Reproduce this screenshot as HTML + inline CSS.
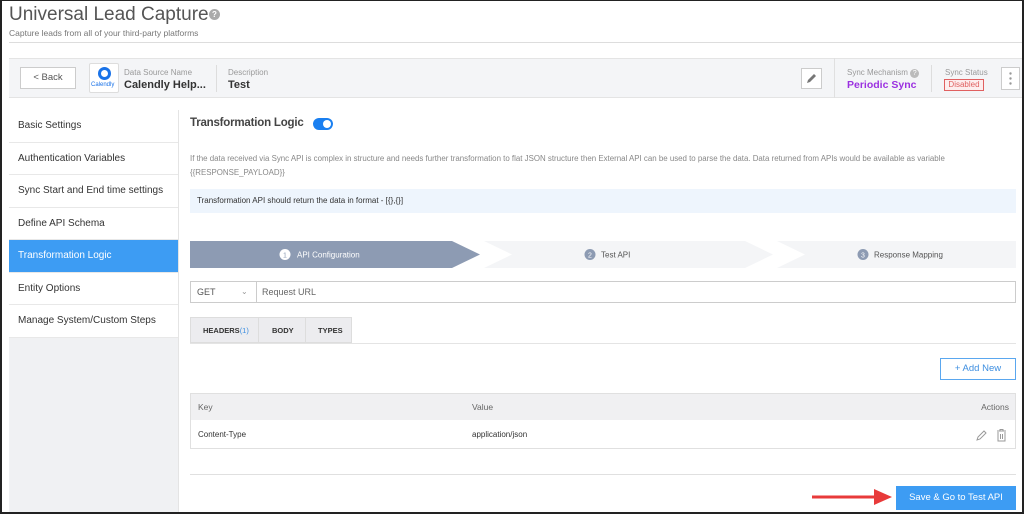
<!DOCTYPE html>
<html><head><style>
*{box-sizing:border-box;margin:0;padding:0}
body{width:1024px;height:514px;overflow:hidden;background:#fff;font-family:"Liberation Sans",sans-serif;color:#333;position:relative}
.a{position:absolute}
.frame{left:0;top:0;width:1024px;height:514px;border:2px solid #222;border-top:1px solid #222;z-index:50;pointer-events:none}
.side div{height:32.5px;border-bottom:1px solid #e8e8e8;font-size:10px;padding-left:9px;line-height:32px;color:#333;background:#fff}
.side .on{background:#3d9cf3;color:#fff}
.lbl{font-size:8px;color:#999}
</style></head><body>
<div class="a frame"></div>
<div class="a" style="left:9px;top:4px;font-size:19px;color:#555">Universal Lead Capture</div>
<div class="a" style="left:209px;top:9px;width:11px;height:11px;border-radius:50%;background:#aaa;color:#fff;font-size:8px;font-weight:bold;text-align:center;line-height:11px">?</div>
<div class="a" style="left:9px;top:28px;font-size:8.5px;color:#777">Capture leads from all of your third-party platforms</div>
<div class="a" style="left:9px;top:42px;width:1013px;height:1px;background:#ddd"></div>
<div class="a" style="left:9px;top:58px;width:1013px;height:40px;background:#f4f5f7;border-top:1px solid #e4e4e4;border-bottom:1px solid #e4e4e4"></div>
<div class="a" style="left:20px;top:67px;width:56px;height:22px;background:#fff;border:1px solid #ccc;font-size:9.5px;color:#555;text-align:center;line-height:20px">&lt; Back</div>
<div class="a" style="left:89px;top:63px;width:30px;height:30px;background:#fff;border:1px solid #ddd;border-radius:2px">
<div class="a" style="left:8px;top:3px;width:13px;height:13px;border-radius:50%;border:3px solid #1a73e8"></div>
<div class="a" style="left:1px;top:18px;font-size:6px;color:#1a73e8">Calendly</div></div>
<div class="a lbl" style="left:124px;top:68px">Data Source Name</div>
<div class="a" style="left:124px;top:79px;font-size:11px;font-weight:bold;color:#333">Calendly Help...</div>
<div class="a" style="left:216px;top:65px;width:1px;height:27px;background:#ddd"></div>
<div class="a lbl" style="left:228px;top:68px">Description</div>
<div class="a" style="left:228px;top:79px;font-size:11px;font-weight:bold">Test</div>
<div class="a" style="left:801px;top:68px;width:21px;height:21px;background:#fff;border:1px solid #ccc">
<svg width="19" height="19" viewBox="0 0 19 19"><path d="M5 14l1-3 6-6 2 2-6 6z" fill="#777"/></svg></div>
<div class="a" style="left:834px;top:58px;width:1px;height:40px;background:#e0e0e0"></div>
<div class="a lbl" style="left:847px;top:68px">Sync Mechanism <span style="display:inline-block;width:9px;height:9px;border-radius:50%;background:#bbb;color:#fff;font-size:7px;text-align:center;line-height:9px">?</span></div>
<div class="a" style="left:847px;top:79px;font-size:10.5px;font-weight:bold;color:#9b30e0">Periodic Sync</div>
<div class="a" style="left:931px;top:65px;width:1px;height:27px;background:#ddd"></div>
<div class="a lbl" style="left:945px;top:68px">Sync Status</div>
<div class="a" style="left:944px;top:79px;width:40px;height:12px;border:1px solid #e06060;background:#fdeeee;color:#e06060;font-size:8px;text-align:center;line-height:10px">Disabled</div>
<div class="a" style="left:1001px;top:67px;width:19px;height:23px;background:#fff;border:1px solid #ccc">
<svg width="17" height="21"><circle cx="8.5" cy="5.5" r="1.2" fill="#999"/><circle cx="8.5" cy="10.5" r="1.2" fill="#999"/><circle cx="8.5" cy="15.5" r="1.2" fill="#999"/></svg></div>

<div class="a" style="left:9px;top:110px;width:170px;height:404px;background:#f0f1f3;border-right:1px solid #e4e4e4"></div>
<div class="a side" style="left:9px;top:110px;width:169px">
<div>Basic Settings</div><div>Authentication Variables</div><div>Sync Start and End time settings</div><div>Define API Schema</div><div class="on">Transformation Logic</div><div>Entity Options</div><div>Manage System/Custom Steps</div></div>

<div class="a" style="left:190px;top:117px;font-size:11.5px;font-weight:bold;color:#444;letter-spacing:-0.2px">Transformation Logic</div>
<div class="a" style="left:313px;top:118px;width:20px;height:12px;border-radius:6px;background:#1a7ff0"><div class="a" style="left:10px;top:2px;width:8px;height:8px;border-radius:50%;background:#fff"></div></div>
<div class="a" style="left:190px;top:152px;font-size:7.9px;color:#888;line-height:14px;width:815px">If the data received via Sync API is complex in structure and needs further transformation to flat JSON structure then External API can be used to parse the data. Data returned from APIs would be available as variable {{RESPONSE_PAYLOAD}}</div>
<div class="a" style="left:190px;top:189px;width:826px;height:24px;background:#eef5fd;font-size:8px;color:#333;padding-left:7px;line-height:24px">Transformation API should return the data in format - [{},{}]</div>

<svg class="a" style="left:190px;top:241px" width="826" height="27">
<rect width="826" height="27" fill="#fff"/>
<polygon points="0,0 262,0 290,13.5 262,27 0,27" fill="#8d9bb3"/>
<polygon points="294,0 555,0 583,13.5 555,27 294,27 322,13.5" fill="#f4f5f7"/>
<polygon points="587,0 826,0 826,27 587,27 615,13.5" fill="#f4f5f7"/>
<circle cx="95" cy="13.5" r="5.5" fill="#fff"/><text x="95" y="16.5" font-size="7" text-anchor="middle" fill="#8d9bb3" font-family="Liberation Sans">1</text>
<text x="107" y="16.5" font-size="8" fill="#fff" font-family="Liberation Sans">API Configuration</text>
<circle cx="400" cy="13.5" r="5.5" fill="#8d9bb3"/><text x="400" y="16.5" font-size="7" text-anchor="middle" fill="#fff" font-family="Liberation Sans">2</text>
<text x="411" y="16.5" font-size="8" fill="#555" font-family="Liberation Sans">Test API</text>
<circle cx="673" cy="13.5" r="5.5" fill="#8d9bb3"/><text x="673" y="16.5" font-size="7" text-anchor="middle" fill="#fff" font-family="Liberation Sans">3</text>
<text x="684" y="16.5" font-size="8" fill="#555" font-family="Liberation Sans">Response Mapping</text>
</svg>

<div class="a" style="left:190px;top:281px;width:826px;height:22px;border:1px solid #ccc;font-size:9px;color:#555;line-height:20px">
<span style="position:absolute;left:6px">GET</span><span style="position:absolute;left:50px;color:#999;font-size:8px">⌄</span>
<span style="position:absolute;left:65px;top:-1px;width:1px;height:22px;background:#ccc"></span>
<span style="position:absolute;left:71px;color:#666">Request URL</span></div>

<div class="a" style="left:190px;top:317px;width:162px;height:26px;background:#ececef;border:1px solid #ddd;font-size:7.5px;font-weight:bold;color:#333;line-height:26px">
<span style="position:absolute;left:12px">HEADERS<span style="color:#3d8ee0;font-weight:normal">(1)</span></span>
<span style="position:absolute;left:67px;top:0;width:1px;height:25px;background:#ddd"></span>
<span style="position:absolute;left:81px">BODY</span>
<span style="position:absolute;left:114px;top:0;width:1px;height:25px;background:#ddd"></span>
<span style="position:absolute;left:127px">TYPES</span></div>
<div class="a" style="left:190px;top:343px;width:826px;height:1px;background:#e4e4e4"></div>

<div class="a" style="left:940px;top:358px;width:76px;height:22px;border:1px solid #5aa7ef;color:#3d8ee0;font-size:9.5px;text-align:center;line-height:20px">+ Add New</div>

<div class="a" style="left:190px;top:393px;width:826px;height:56px;border:1px solid #e0e0e0"></div>
<div class="a" style="left:191px;top:394px;width:824px;height:26px;background:#f0f0f2;font-size:8.5px;color:#666;line-height:26px">
<span style="position:absolute;left:7px">Key</span><span style="position:absolute;left:281px">Value</span><span style="position:absolute;right:6px">Actions</span></div>
<div class="a" style="left:191px;top:421px;width:824px;height:27px;font-size:8px;color:#333;line-height:27px">
<span style="position:absolute;left:7px">Content-Type</span><span style="position:absolute;left:281px">application/json</span>
<svg style="position:absolute;left:784px;top:7px" width="32" height="14"><path d="M2 12l1-3 6-6 2 2-6 6z" fill="none" stroke="#999" stroke-width="1"/><path d="M22 3h9M25 3V1.5h3V3M23 4v9h7V4M25.5 6v5M27.5 6v5" fill="none" stroke="#999" stroke-width="1"/></svg></div>

<div class="a" style="left:190px;top:474px;width:826px;height:1px;background:#e0e0e0"></div>
<svg class="a" style="left:810px;top:488px" width="84" height="18"><path d="M2 9H66" stroke="#e83a3a" stroke-width="3"/><polygon points="64,1 82,9 64,17" fill="#e83a3a"/></svg>
<div class="a" style="left:896px;top:486px;width:120px;height:24px;background:#3d9cf3;color:#fff;font-size:9.5px;text-align:center;line-height:24px">Save &amp; Go to Test API</div>
</body></html>
